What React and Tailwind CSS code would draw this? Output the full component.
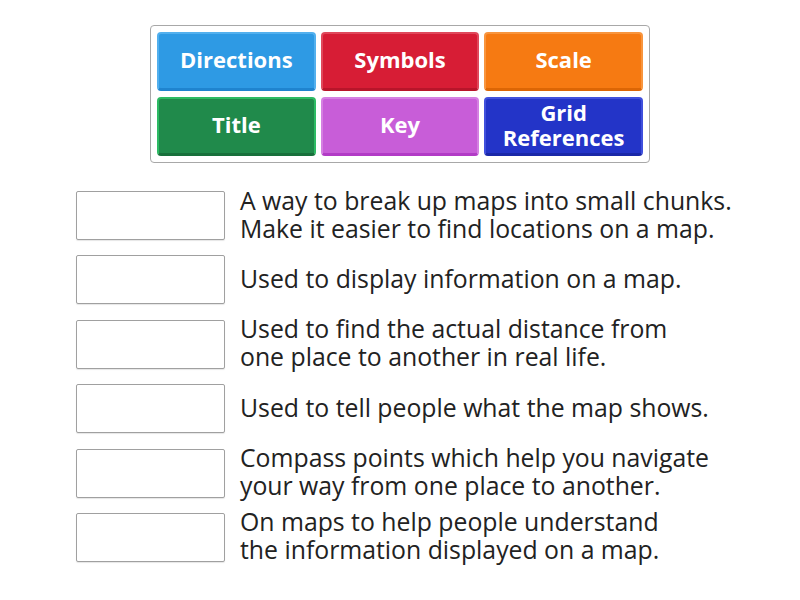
import React from 'react';

const tiles = [
    { label: 'Directions', bg: 'bg-[#2e9ae4]', rim: 'border-[#52b0ee]', base: 'border-b-[#1f84cf]' },
    { label: 'Symbols', bg: 'bg-[#d71d35]', rim: 'border-[#e0485b]', base: 'border-b-[#b8152a]' },
    { label: 'Scale', bg: 'bg-[#f67a12]', rim: 'border-[#f8953e]', base: 'border-b-[#dc6605]' },
    { label: 'Title', bg: 'bg-[#208a4b]', rim: 'border-[#2dbb64]', base: 'border-b-[#18703b]' },
    { label: 'Key', bg: 'bg-[#c85dd8]', rim: 'border-[#d57fe2]', base: 'border-b-[#b23bc6]' },
    { label: 'Grid References', bg: 'bg-[#2334c8]', rim: 'border-[#4050dc]', base: 'border-b-[#1a28a8]' },
];

const rows = [
    ['A way to break up maps into small chunks.', 'Make it easier to find locations on a map.'],
    ['Used to display information on a map.'],
    ['Used to find the actual distance from', 'one place to another in real life.'],
    ['Used to tell people what the map shows.'],
    ['Compass points which help you navigate', 'your way from one place to another.'],
    ['On maps to help people understand', 'the information displayed on a map.'],
];

const Tile = ({ label, bg, rim, base }) => (
    <div
        className={`h-[59px] rounded-[4px] border-2 border-b-[3px] ${rim} ${base} ${bg} flex items-center justify-center px-2 text-center text-white font-bold text-[22px] leading-[25px] pb-[3px]`}
    >
        {label === 'Grid References' ? (
            <span>
                Grid
                <br />
                References
            </span>
        ) : (
            label
        )}
    </div>
);

const App = () => {
    return (
        <div className="w-[800px] h-[600px] bg-white font-['Open_Sans',sans-serif] text-[#222]">
            <div className="pt-[25px] flex justify-center">
                <div className="w-[500px] border border-[#a8a8a8] rounded-[4px] p-[6px] grid grid-cols-3 gap-x-[5px] gap-y-[6px]">
                    {tiles.map((t) => (
                        <Tile key={t.label} {...t} />
                    ))}
                </div>
            </div>

            <div className="mt-[28px] pl-[76px] flex flex-col gap-[15.4px]">
                {rows.map((lines, i) => (
                    <div key={i} className="h-[49px] flex items-center gap-[15px]">
                        <div className="w-[149px] h-[49px] shrink-0 border border-[#a0a0a0] rounded-[2px] bg-white shadow-[0_1px_1px_rgba(0,0,0,0.1)]" />
                        <div className="text-[24.8px] leading-[28px] whitespace-nowrap -mt-[4px]">
                            {lines.map((l) => (
                                <div key={l}>{l}</div>
                            ))}
                        </div>
                    </div>
                ))}
            </div>
        </div>
    );
};

export default App;
